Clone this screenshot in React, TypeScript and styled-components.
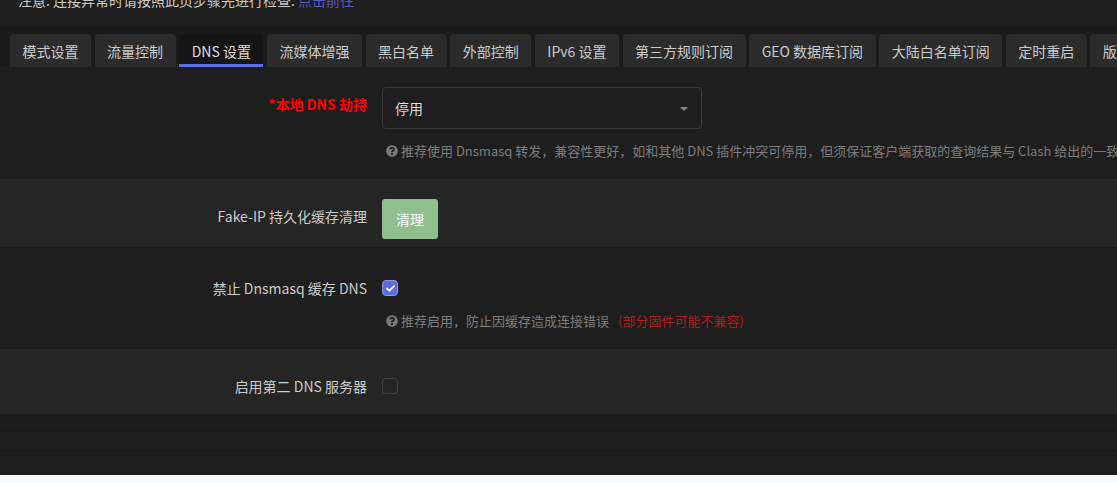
import styled, { createGlobalStyle } from 'styled-components';
import { FaQuestionCircle, FaCheck } from 'react-icons/fa';

const GlobalStyle = createGlobalStyle`
  html, body {
    margin: 0;
    padding: 0;
    background: #f5f9fc;
    overflow: hidden;
  }
  body {
    font-family: "Noto Sans CJK SC", "Noto Sans", sans-serif;
    font-size: 14px;
    color: #cccccc;
  }
`;

const Page = styled.div`
  background: #1e1e1e;
  width: 100%;
  overflow: hidden;
`;

const Notice = styled.div`
  margin-top: -10px;
  padding: 0 18px 15px;
  line-height: 20px;
  white-space: nowrap;
  color: #cccccc;

  a {
    color: #5a5ac0;
    text-decoration: none;
  }
`;

const TabBar = styled.ul`
  list-style: none;
  margin: 0;
  padding: 9px 0 0 10px;
  display: flex;
  gap: 3.6px;
  background: #1a1a1a;
  white-space: nowrap;
  overflow: hidden;
`;

const Tab = styled.li<{ $active?: boolean }>`
  flex: none;
  height: 33px;
  box-sizing: border-box;
  padding: 0 12.5px;
  display: flex;
  align-items: center;
  border-radius: 4px 4px 0 0;
  background: ${(p) => (p.$active ? '#151515' : '#2b2b2b')};
  color: ${(p) => (p.$active ? '#dddddd' : '#cccccc')};
  border-bottom: 3px solid ${(p) => (p.$active ? '#5c6ee0' : 'transparent')};
  padding-top: 3px;
`;

const Row = styled.div<{ $alt?: boolean; $top: number; $bottom: number }>`
  display: grid;
  grid-template-columns: 367px 1fr;
  column-gap: 15px;
  padding: ${(p) => p.$top}px 0 ${(p) => p.$bottom}px;
  background: ${(p) => (p.$alt ? '#252525' : '#1e1e1e')};
  white-space: nowrap;
`;

const Label = styled.div<{ $required?: boolean }>`
  text-align: right;
  line-height: 20px;
  padding-top: 7px;
  color: ${(p) => (p.$required ? '#ff0000' : '#cccccc')};
  font-weight: ${(p) => (p.$required ? 700 : 400)};
`;

const Field = styled.div`
  display: flex;
  flex-direction: column;
  align-items: flex-start;
`;

const Select = styled.div`
  position: relative;
  width: 320px;
  height: 42px;
  box-sizing: border-box;
  border: 1px solid #3b3b3b;
  border-radius: 4px;
  padding: 0 12px;
  display: flex;
  align-items: center;
  color: #dddddd;

  &::after {
    content: '';
    position: absolute;
    right: 13px;
    top: 19px;
    border-left: 4px solid transparent;
    border-right: 4px solid transparent;
    border-top: 4px solid #858585;
  }
`;

const Button = styled.button`
  height: 40px;
  width: 56px;
  border: none;
  border-radius: 3px;
  background: #8fbf8f;
  color: #ffffff;
  font: inherit;
  font-size: 14px;
  cursor: pointer;
`;

const CheckLine = styled.div`
  height: 34px;
  display: flex;
  align-items: center;
`;

const Checkbox = styled.span<{ $checked?: boolean }>`
  width: 16px;
  height: 16px;
  box-sizing: border-box;
  border-radius: 4px;
  display: inline-flex;
  align-items: center;
  justify-content: center;
  background: ${(p) => (p.$checked ? '#5b6be0' : 'transparent')};
  border: 1px solid ${(p) => (p.$checked ? '#8c97f0' : '#444444')};
  color: #ffffff;
  font-size: 9px;
`;

const Help = styled.div<{ $gap: number }>`
  margin-top: ${(p) => p.$gap}px;
  padding-left: 4px;
  line-height: 20px;
  font-size: 13px;
  color: #7d7d7d;
  display: flex;
  align-items: center;
  gap: 3px;

  svg {
    font-size: 12px;
    color: #7a7a7a;
  }
`;

const Warn = styled.span`
  color: #a8221c;
  margin-left: 6px;
`;

const Band = styled.div<{ $h: number; $bg: string; $line?: boolean }>`
  height: ${(p) => p.$h}px;
  background: ${(p) => p.$bg};
  border-top: ${(p) => (p.$line ? '1px solid #191919' : 'none')};
  box-sizing: border-box;
`;

const tabs = [
  '模式设置',
  '流量控制',
  'DNS 设置',
  '流媒体增强',
  '黑白名单',
  '外部控制',
  'IPv6 设置',
  '第三方规则订阅',
  'GEO 数据库订阅',
  '大陆白名单订阅',
  '定时重启',
  '版本更新',
];

export default function App() {
  return (
    <>
      <GlobalStyle />
      <Page>
        <Notice>
          注意: 连接异常时请按照此页步骤先进行检查: <a href="#">点击前往</a>
        </Notice>

        <TabBar>
          {tabs.map((t) => (
            <Tab key={t} $active={t === 'DNS 设置'}>
              {t}
            </Tab>
          ))}
        </TabBar>

        <Row $top={20} $bottom={18}>
          <Label $required>*本地 DNS 劫持</Label>
          <Field>
            <Select>停用</Select>
            <Help $gap={12}>
              <FaQuestionCircle />
              推荐使用 Dnsmasq 转发，兼容性更好，如和其他 DNS 插件冲突可停用，但须保证客户端获取的查询结果与 Clash 给出的一致
            </Help>
          </Field>
        </Row>

        <Row $alt $top={20} $bottom={8}>
          <Label>Fake-IP 持久化缓存清理</Label>
          <Field>
            <Button>清理</Button>
          </Field>
        </Row>

        <Row $top={24} $bottom={18}>
          <Label>禁止 Dnsmasq 缓存 DNS</Label>
          <Field>
            <CheckLine>
              <Checkbox $checked>
                <FaCheck />
              </Checkbox>
            </CheckLine>
            <Help $gap={6}>
              <FaQuestionCircle />
              推荐启用，防止因缓存造成连接错误
              <Warn>(部分固件可能不兼容)</Warn>
            </Help>
          </Field>
        </Row>

        <Row $alt $top={20} $bottom={11}>
          <Label>启用第二 DNS 服务器</Label>
          <Field>
            <CheckLine>
              <Checkbox />
            </CheckLine>
          </Field>
        </Row>

        <Band $h={17} $bg="#1c1c1c" />
        <Band $h={19} $bg="#1e1e1e" $line />
        <Band $h={25} $bg="#1e1e1e" $line />
      </Page>
    </>
  );
}
